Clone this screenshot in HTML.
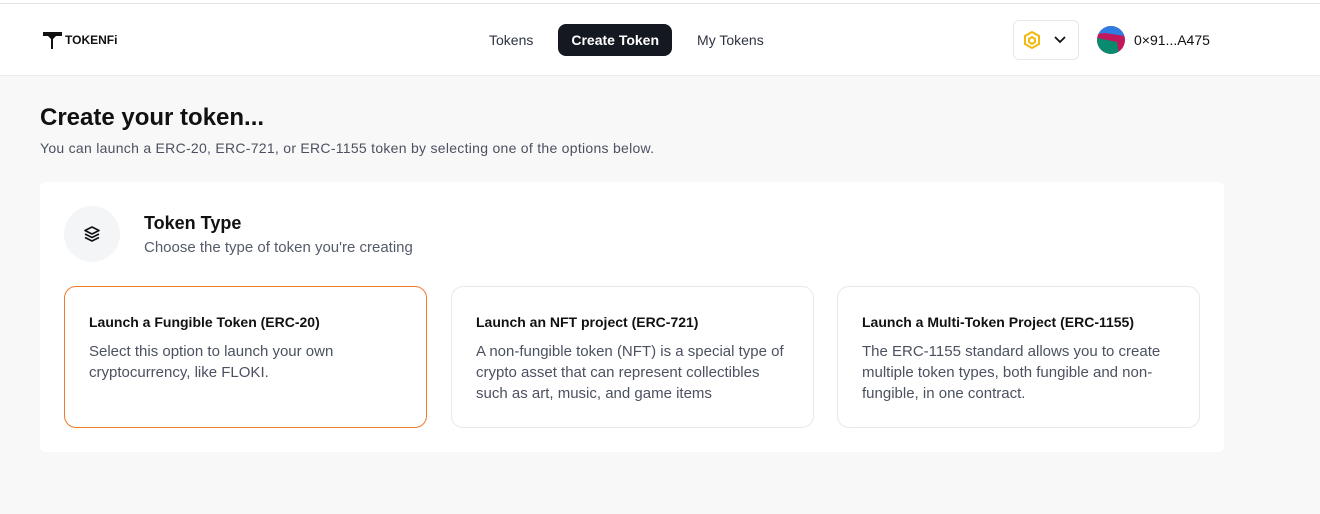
<!DOCTYPE html>
<html><head><meta charset="utf-8"><style>
*{box-sizing:border-box;margin:0;padding:0}
body{width:1320px;height:514px;background:#f8f8f8;font-family:"Liberation Sans",Arial,sans-serif;color:#111;position:relative;overflow:hidden}
.top{position:absolute;left:0;top:0;width:1320px;height:4px;background:#fff;border-bottom:1px solid #e5e5e5}
.hdr{position:absolute;left:0;top:4px;width:1320px;height:72px;background:#fff;border-bottom:1px solid #ececec}
.logo{position:absolute;left:43px;top:27px;display:flex;align-items:center;gap:3px;font-weight:900;font-size:12px;letter-spacing:0}
.nav{position:absolute;top:20px;left:476px;display:flex;gap:0;align-items:center;font-size:14px;color:#2d3340}
.nav span{padding:8px 13px;border-radius:8px}
.nav .act{background:#141821;color:#fff;font-weight:bold;margin:0 12px}
.net{position:absolute;left:1013px;top:16px;width:66px;height:40px;border:1px solid #e5e7eb;border-radius:6px;background:#fff}
.av{position:absolute;left:1097px;top:22px;width:28px;height:28px;border-radius:50%;overflow:hidden}
.addr{position:absolute;left:1134px;top:28px;font-size:14px;color:#111}
h1{position:absolute;left:40px;top:104px;font-size:24px;font-weight:bold;color:#111}
.sub{position:absolute;left:40px;top:140px;font-size:14px;letter-spacing:0.28px;color:#4b5160}
.panel{position:absolute;left:40px;top:182px;width:1184px;height:270px;background:#fff;border-radius:6px}
.ic{position:absolute;left:24px;top:24px;width:56px;height:56px;border-radius:50%;background:#f4f5f7;display:flex;align-items:center;justify-content:center}
.tt{position:absolute;left:104px;top:31px;font-size:18px;font-weight:bold}
.ts{position:absolute;left:104px;top:57px;font-size:15px;color:#555b6b}
.card{position:absolute;top:104px;width:363px;height:142px;border:1px solid #e7e8ea;border-radius:12px;padding:27px 24px}
.card.sel{border-color:#ee7a2b}
.card b{display:block;font-size:14px;margin-bottom:11px}
.card p{font-size:15px;line-height:21px;color:#4b5160}
</style></head><body>
<div class="top"></div>
<div class="hdr">
<div class="logo"><svg width="19" height="18" viewBox="0 0 19 18"><path d="M0 1h19v4h-6l-3 3v10H8V8L5 5H0z" fill="#111"/></svg><span>TOKENFi</span></div>
<div class="nav"><span>Tokens</span><span class="act">Create Token</span><span>My Tokens</span></div>
<div class="net"><svg style="position:absolute;left:8px;top:9px" width="20" height="20" viewBox="0 0 20 20" fill="none" stroke="#f0b90b" stroke-width="2"><path d="M10 2l7 4v8l-7 4-7-4V6z"/><path d="M10 7l3 2v3l-3 2-3-2V9z"/></svg><svg style="position:absolute;left:40px;top:14px" width="12" height="10" viewBox="0 0 12 10"><path d="M1 2l5 5 5-5" stroke="#111" stroke-width="1.8" fill="none"/></svg></div>
<div class="av"><svg width="28" height="28" viewBox="0 0 28 28"><rect width="28" height="28" fill="#c2185b"/><path d="M0 0h28v10L8 7 0 8z" fill="#2f7de1"/><path d="M0 12l20 4 2 12H0z" fill="#0a8a6e"/></svg></div>
<div class="addr">0×91...A475</div>
</div>
<h1>Create your token...</h1>
<div class="sub">You can launch a ERC-20, ERC-721, or ERC-1155 token by selecting one of the options below.</div>
<div class="panel">
<div class="ic"><svg width="20" height="20" viewBox="0 0 20 20" fill="none" stroke="#111" stroke-width="1.6" stroke-linejoin="round"><path d="M10 3l7 3.5-7 3.5-7-3.5z"/><path d="M3 10l7 3.5 7-3.5"/><path d="M3 13.5l7 3.5 7-3.5"/></svg></div>
<div class="tt">Token Type</div>
<div class="ts">Choose the type of token you're creating</div>
<div class="card sel" style="left:24px"><b>Launch a Fungible Token (ERC-20)</b><p>Select this option to launch your own cryptocurrency, like FLOKI.</p></div>
<div class="card" style="left:411px"><b>Launch an NFT project (ERC-721)</b><p>A non-fungible token (NFT) is a special type of crypto asset that can represent collectibles such as art, music, and game items</p></div>
<div class="card" style="left:797px"><b>Launch a Multi-Token Project (ERC-1155)</b><p>The ERC-1155 standard allows you to create multiple token types, both fungible and non-fungible, in one contract.</p></div>
</div>
</body></html>
